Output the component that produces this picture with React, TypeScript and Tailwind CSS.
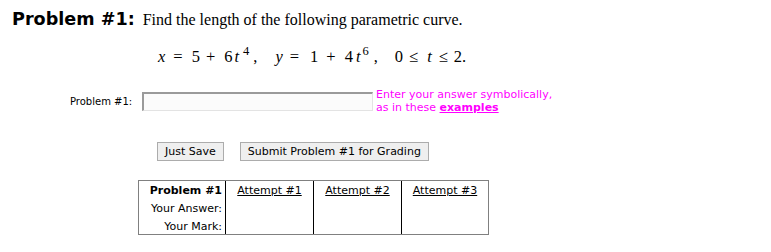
import React from "react";

const verdana = { fontFamily: '"DejaVu Sans", Verdana, sans-serif' };
const serif = { fontFamily: '"Liberation Serif", "Times New Roman", serif' };

function Eq() {
  // tokens of the rendered formula, left gap in px before each
  const it = "italic";
  return (
    <div
      className="flex items-baseline h-[20px] pl-[158px] text-[16.5px] leading-[20px] text-black"
      style={serif}
    >
      <span className={it}>x</span>
      <span className="ml-[8px]">=</span>
      <span className="ml-[9px]">5</span>
      <span className="ml-[6px]">+</span>
      <span className="ml-[9px]">6</span>
      <span className={`${it} ml-[2px]`}>t</span>
      <span className="ml-[4px] text-[12.5px] relative -top-[7px]">4</span>
      <span className="ml-[4px]">,</span>
      <span className={`${it} ml-[18px]`}>y</span>
      <span className="ml-[7px]">=</span>
      <span className="ml-[11px]">1</span>
      <span className="ml-[8px]">+</span>
      <span className="ml-[9px]">4</span>
      <span className={`${it} ml-[3px]`}>t</span>
      <span className="ml-[2px] text-[12.5px] relative -top-[7px]">6</span>
      <span className="ml-[5px]">,</span>
      <span className="ml-[17px]">0</span>
      <span className="ml-[6px]">≤</span>
      <span className={`${it} ml-[9px]`}>t</span>
      <span className="ml-[7px]">≤</span>
      <span className="ml-[6px]">2.</span>
    </div>
  );
}

export default function App() {
  return (
    <div className="w-[771px] h-[252px] bg-white text-black overflow-hidden">
      {/* heading */}
      <div className="flex items-baseline pt-[7px] pl-[12px] h-[31px] leading-[24px]">
        <span className="font-bold text-[17.6px]" style={verdana}>
          Problem #1:
        </span>
        <span className="ml-[8px] text-[16px]" style={serif}>
          Find the length of the following parametric curve.
        </span>
      </div>

      <div className="mt-[16px]">
        <Eq />
      </div>

      {/* answer row */}
      <div className="flex items-center mt-[21px] pl-[70px]" style={verdana}>
        <span className="text-[10px] w-[63px] whitespace-nowrap">Problem #1:</span>
        <input
          type="text"
          className="ml-[9px] w-[231px] h-[19px] bg-[#fbfbfb] border-t-2 border-l-2 border-b border-r border-t-[#9a9a9a] border-l-[#9a9a9a] border-b-[#e3e3e3] border-r-[#e3e3e3] outline-none"
        />
        <div className="ml-[3px] text-[11px] leading-[13px] text-[#ff00ff]">
          <div>Enter your answer symbolically,</div>
          <div>
            as in these{" "}
            <a href="#" className="font-bold underline text-[#ff00ff]">
              examples
            </a>
          </div>
        </div>
      </div>

      {/* buttons */}
      <div className="flex mt-[28px] pl-[157px] gap-[16px]" style={verdana}>
        <button className="h-[19px] px-[7px] text-[11px] leading-[17px] border border-[#acacac] bg-[#efefef] text-black">
          Just Save
        </button>
        <button className="h-[19px] px-[7px] text-[11px] leading-[17px] border border-[#acacac] bg-[#efefef] text-black">
          Submit Problem #1 for Grading
        </button>
      </div>

      {/* attempts table */}
      <div
        className="mt-[19px] ml-[138px] w-[351px] h-[55px] border border-[#808080] flex text-[11px] leading-[18px]"
        style={verdana}
      >
        <div className="w-[86px] flex flex-col items-end pr-[3px] pt-[1px]">
          <div className="font-bold">Problem #1</div>
          <div>Your Answer:</div>
          <div>Your Mark:</div>
        </div>
        <div className="w-[88px] border-l border-black text-center pt-[1px]">
          <a href="#" className="underline">Attempt #1</a>
        </div>
        <div className="w-[88px] border-l border-black text-center pt-[1px]">
          <a href="#" className="underline">Attempt #2</a>
        </div>
        <div className="flex-1 border-l border-black text-center pt-[1px]">
          <a href="#" className="underline">Attempt #3</a>
        </div>
      </div>
    </div>
  );
}
